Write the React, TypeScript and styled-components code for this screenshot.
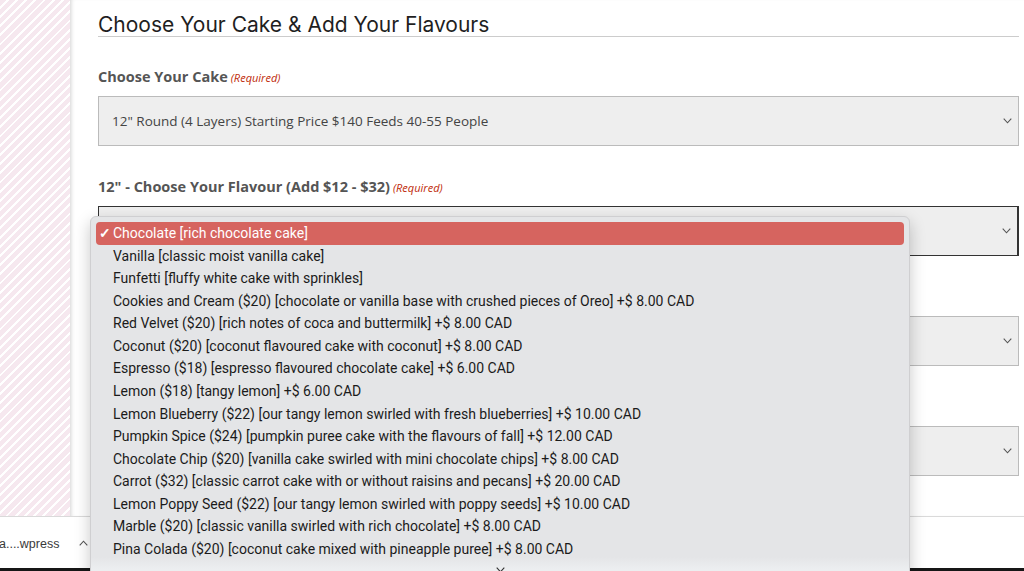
import styled, { createGlobalStyle } from "styled-components";

const GlobalStyle = createGlobalStyle`
  html, body {
    margin: 0;
    padding: 0;
    background: #ffffff;
  }
  * {
    box-sizing: border-box;
  }
`;

const Page = styled.div`
  position: relative;
  width: 1024px;
  height: 571px;
  overflow: hidden;
  display: flex;
  flex-direction: column;
  font-family: "Open Sans", "Liberation Sans", sans-serif;
`;

const Viewport = styled.div`
  flex: 1;
  display: flex;
  min-height: 0;
`;

const Stripes = styled.div`
  width: 70px;
  flex-shrink: 0;
  background: repeating-linear-gradient(
    135deg,
    #f6e8ef 0px,
    #f6e8ef 4.5px,
    #ffffff 4.5px,
    #ffffff 6.5px
  );
`;

const Main = styled.main`
  flex: 1;
  padding: 14px 5px 0 28px;
  box-shadow: inset 4px 0 4px -3px rgba(0, 0, 0, 0.18);
`;

const Title = styled.h2`
  margin: 0;
  font-family: "Inter", "Noto Sans", sans-serif;
  font-weight: 400;
  font-size: 21px;
  line-height: 22px;
  color: #1f1f1f;
  border-bottom: 1px solid #cccccc;
`;

const Field = styled.div`
  margin-top: 30px;

  & + & {
    margin-top: 31px;
  }
`;

const Label = styled.div`
  height: 20px;
  font-size: 14.5px;
  font-weight: 700;
  line-height: 20px;
  color: #555555;
  margin-bottom: 9px;
`;

const Required = styled.span`
  font-size: 11px;
  font-weight: 400;
  font-style: italic;
  color: #c02b0a;
  margin-left: 3px;
`;

const SelectBox = styled.div<{ $focused?: boolean }>`
  height: 50px;
  display: flex;
  align-items: center;
  justify-content: space-between;
  padding: 0 6px 0 13px;
  background: #eeeeee;
  border: 1px solid ${(p) => (p.$focused ? "#333333" : "#bbbbbb")};
  border-right-width: ${(p) => (p.$focused ? "2px" : "1px")};
  font-size: 13.5px;
  color: #444444;
`;

const Shelf = styled.div`
  height: 52px;
  flex-shrink: 0;
  border-top: 1px solid #dadada;
  background: #ffffff;
  display: flex;
  align-items: center;
  gap: 20px;
  font-family: "Liberation Sans", "Noto Sans", sans-serif;
  font-size: 12.5px;
  color: #3a3a3a;
`;

const FileName = styled.span`
  margin-left: -1px;
  margin-top: 2px;
`;

const DarkStrip = styled.div`
  height: 3px;
  flex-shrink: 0;
  background: #161616;
`;

const Menu = styled.div`
  position: absolute;
  top: 216px;
  left: 90px;
  width: 820px;
  height: 362px;
  padding: 5px 5px 0;
  background: #e4e5e7;
  border: 1px solid #cfcfd1;
  border-radius: 6px;
  box-shadow: 0 6px 16px rgba(0, 0, 0, 0.22);
  font-family: "Roboto", "Liberation Sans", sans-serif;
  font-size: 14px;
  color: #1b1b1b;
  overflow: hidden;
`;

const Option = styled.div<{ $selected?: boolean }>`
  position: relative;
  height: 22.57px;
  line-height: 22.57px;
  padding-left: 17px;
  border-radius: 4px;
  white-space: nowrap;
  background: ${(p) => (p.$selected ? "#d6645f" : "transparent")};
  color: ${(p) => (p.$selected ? "#ffffff" : "#1b1b1b")};
`;

const Check = styled.span`
  position: absolute;
  left: 3px;
  top: 0;
  font-size: 14px;
  font-weight: 700;
`;

const ScrollHint = styled.div`
  position: absolute;
  left: 0;
  right: 0;
  bottom: 0;
  height: 20px;
  display: flex;
  justify-content: center;
  padding-top: 10px;
  background: linear-gradient(rgba(236, 237, 239, 0), #eceef0 60%);
`;

const Chevron = ({ up = false, color = "#555" }: { up?: boolean; color?: string }) => (
  <svg width="9" height="6" viewBox="0 0 9 6">
    <path
      d={up ? "M0.7 5.3 L4.5 1.2 L8.3 5.3" : "M0.7 0.7 L4.5 4.8 L8.3 0.7"}
      fill="none"
      stroke={color}
      strokeWidth="1.1"
    />
  </svg>
);

const flavours = [
  "Chocolate [rich chocolate cake]",
  "Vanilla [classic moist vanilla cake]",
  "Funfetti [fluffy white cake with sprinkles]",
  "Cookies and Cream ($20) [chocolate or vanilla base with crushed pieces of Oreo] +$ 8.00 CAD",
  "Red Velvet ($20) [rich notes of coca and buttermilk] +$ 8.00 CAD",
  "Coconut ($20) [coconut flavoured cake with coconut] +$ 8.00 CAD",
  "Espresso ($18) [espresso flavoured chocolate cake] +$ 6.00 CAD",
  "Lemon ($18) [tangy lemon] +$ 6.00 CAD",
  "Lemon Blueberry ($22) [our tangy lemon swirled with fresh blueberries] +$ 10.00 CAD",
  "Pumpkin Spice ($24) [pumpkin puree cake with the flavours of fall] +$ 12.00 CAD",
  "Chocolate Chip ($20) [vanilla cake swirled with mini chocolate chips] +$ 8.00 CAD",
  "Carrot ($32) [classic carrot cake with or without raisins and pecans] +$ 20.00 CAD",
  "Lemon Poppy Seed ($22) [our tangy lemon swirled with poppy seeds] +$ 10.00 CAD",
  "Marble ($20) [classic vanilla swirled with rich chocolate] +$ 8.00 CAD",
  "Pina Colada ($20) [coconut cake mixed with pineapple puree] +$ 8.00 CAD",
];

export default function App() {
  return (
    <>
      <GlobalStyle />
      <Page>
        <Viewport>
          <Stripes />
          <Main>
            <Title>Choose Your Cake &amp; Add Your Flavours</Title>

            <Field>
              <Label>
                Choose Your Cake<Required>(Required)</Required>
              </Label>
              <SelectBox>
                <span>12" Round (4 Layers) Starting Price $140 Feeds 40-55 People</span>
                <Chevron />
              </SelectBox>
            </Field>

            <Field>
              <Label>
                12" - Choose Your Flavour (Add $12 - $32)<Required>(Required)</Required>
              </Label>
              <SelectBox $focused>
                <span />
                <Chevron />
              </SelectBox>
            </Field>

            {/* these two fields sit under the open menu; only their right ends show */}
            <Field>
              <Label />
              <SelectBox>
                <span />
                <Chevron />
              </SelectBox>
            </Field>

            <Field>
              <Label />
              <SelectBox>
                <span />
                <Chevron />
              </SelectBox>
            </Field>
          </Main>
        </Viewport>

        <Shelf>
          <FileName>a....wpress</FileName>
          <Chevron up />
        </Shelf>
        <DarkStrip />

        <Menu>
          {flavours.map((f, i) => (
            <Option key={f} $selected={i === 0}>
              {i === 0 && <Check>✓</Check>}
              {f}
            </Option>
          ))}
          <ScrollHint>
            <Chevron color="#333" />
          </ScrollHint>
        </Menu>
      </Page>
    </>
  );
}
